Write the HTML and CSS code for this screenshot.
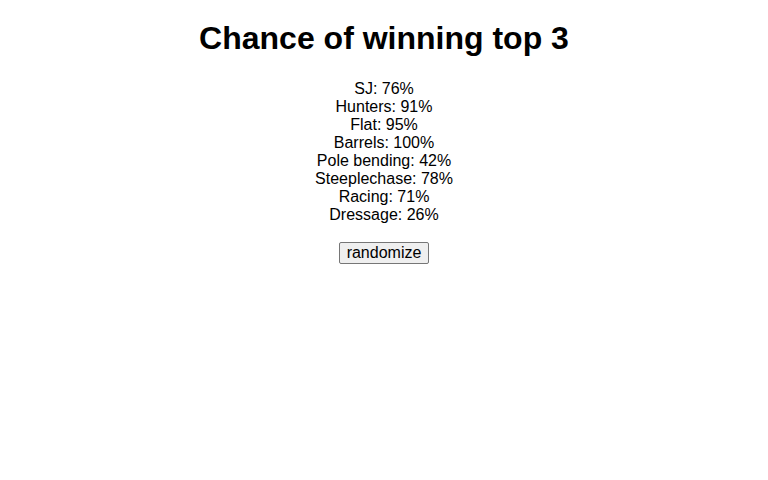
FILE: index.html
```html
<!DOCTYPE html>
<html lang="en">
<head>
<meta charset="utf-8">
<title>Chance of winning top 3</title>
<link rel="stylesheet" href="styles.css">
</head>
<body>
<main class="page">
  <h1 class="title">Chance of winning top 3</h1>
  <div class="results">
    <div class="result">SJ: 76%</div>
    <div class="result">Hunters: 91%</div>
    <div class="result">Flat: 95%</div>
    <div class="result">Barrels: 100%</div>
    <div class="result">Pole bending: 42%</div>
    <div class="result">Steeplechase: 78%</div>
    <div class="result">Racing: 71%</div>
    <div class="result">Dressage: 26%</div>
  </div>
  <p class="actions"><button class="btn" type="button">randomize</button></p>
</main>
</body>
</html>
```

FILE: styles.css
```css
body {
  margin: 0;
  font-family: "Liberation Sans", Arial, sans-serif;
  font-size: 16px;
  color: #000;
  background: #fff;
}

.page {
  text-align: center;
  padding-top: 1px;
}

.title {
  font-size: 32px;
  font-weight: bold;
  margin: 19px 0 23px;
}

.results {
  line-height: 18px;
}

.actions {
  margin: 18px 0;
}

.btn {
  font-family: inherit;
  font-size: 16px;
  padding: 1px 7px;
  line-height: 18px;
  color: #000;
  background: #efefef;
  border: 1px solid #767676;
  border-radius: 2px;
}
```
